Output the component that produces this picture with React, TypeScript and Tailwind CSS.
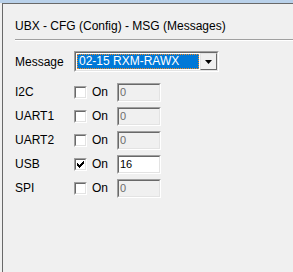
import React from 'react';

const rows = [
  { name: 'I2C', on: false, value: '0' },
  { name: 'UART1', on: false, value: '0' },
  { name: 'UART2', on: false, value: '0' },
  { name: 'USB', on: true, value: '16' },
  { name: 'SPI', on: false, value: '0' },
];

function Check({ checked }: { checked: boolean }) {
  return (
    <div className="w-[13px] h-[13px] border-t border-l border-[#a0a0a0] border-r border-b border-r-white border-b-white">
      <div className="w-full h-full bg-white border-t border-l border-[#696969] border-r border-b border-r-[#e3e3e3] border-b-[#e3e3e3] flex items-center justify-center">
        {checked && (
          <svg width="7" height="7" viewBox="0 0 7 7">
            <path d="M0 2h1v1h1v1h1V3h1V2h1V1h1V0h1v3H6v1H5v1H4v1H3v1H2V6H1V5H0z" fill="#000" />
          </svg>
        )}
      </div>
    </div>
  );
}

function Field({ value, enabled }: { value: string; enabled: boolean }) {
  return (
    <div className="w-[44px] h-[19px] border-t border-l border-[#a0a0a0] border-r border-b border-r-white border-b-white">
      <div
        className={`w-full h-full border-t border-l border-[#696969] border-r border-b border-r-[#e3e3e3] border-b-[#e3e3e3] pl-[1px] leading-[15px] ${
          enabled ? 'bg-white text-black' : 'bg-[#f0f0f0] text-[#6d6d6d]'
        }`}
      >
        {value}
      </div>
    </div>
  );
}

export default function App() {
  return (
    <div className="w-[293px] h-[272px] bg-[#f0f0f0] flex flex-col overflow-hidden text-[11px] text-black" style={{ fontFamily: '"Liberation Sans", Arial, sans-serif' }}>
      <div className="h-[3px] bg-[#b9d1ea]" />
      <div className="flex-1 flex pl-[2px]">
        <div className="flex-1 border-l border-t border-[#696969] pl-[12px] pt-[15px]">
          <div className="leading-[14px] text-[12px]">UBX - CFG (Config) - MSG (Messages)</div>
          <div className="mt-[6px] border-t border-[#a0a0a0] border-b border-b-white" />

          <div className="mt-[10px] flex items-center h-[21px]">
            <div className="w-[59px] text-[12px]">Message</div>
            <div className="w-[145px] h-[21px] border-t border-l border-[#a0a0a0] border-r border-b border-r-white border-b-white">
              <div className="w-full h-full flex bg-white border-t border-l border-[#696969] border-r border-b border-r-[#e3e3e3] border-b-[#e3e3e3]">
                <div className="flex-1 p-[1px]">
                  <div className="h-full bg-[#0078d7] text-white border border-dotted border-[#f08a24] leading-[13px] pl-[1px] text-[12px]">
                    02-15 RXM-RAWX
                  </div>
                </div>
                <div className="w-[17px] bg-[#f0f0f0] border-t border-l border-[#e3e3e3] border-r border-b border-r-[#696969] border-b-[#696969] flex items-center justify-center">
                  <svg width="7" height="4" viewBox="0 0 7 4">
                    <path d="M0 0h7L3.5 4z" fill="#000" />
                  </svg>
                </div>
              </div>
            </div>
          </div>

          <div className="mt-[10px] flex flex-col gap-[4px]">
            {rows.map((r) => (
              <div key={r.name} className="flex items-center h-[20px]">
                <div className="w-[59px] text-[12px]">{r.name}</div>
                <Check checked={r.on} />
                <div className="w-[30px] pl-[5px] text-[12px]">On</div>
                <Field value={r.value} enabled={r.on} />
              </div>
            ))}
          </div>
        </div>
      </div>
    </div>
  );
}
